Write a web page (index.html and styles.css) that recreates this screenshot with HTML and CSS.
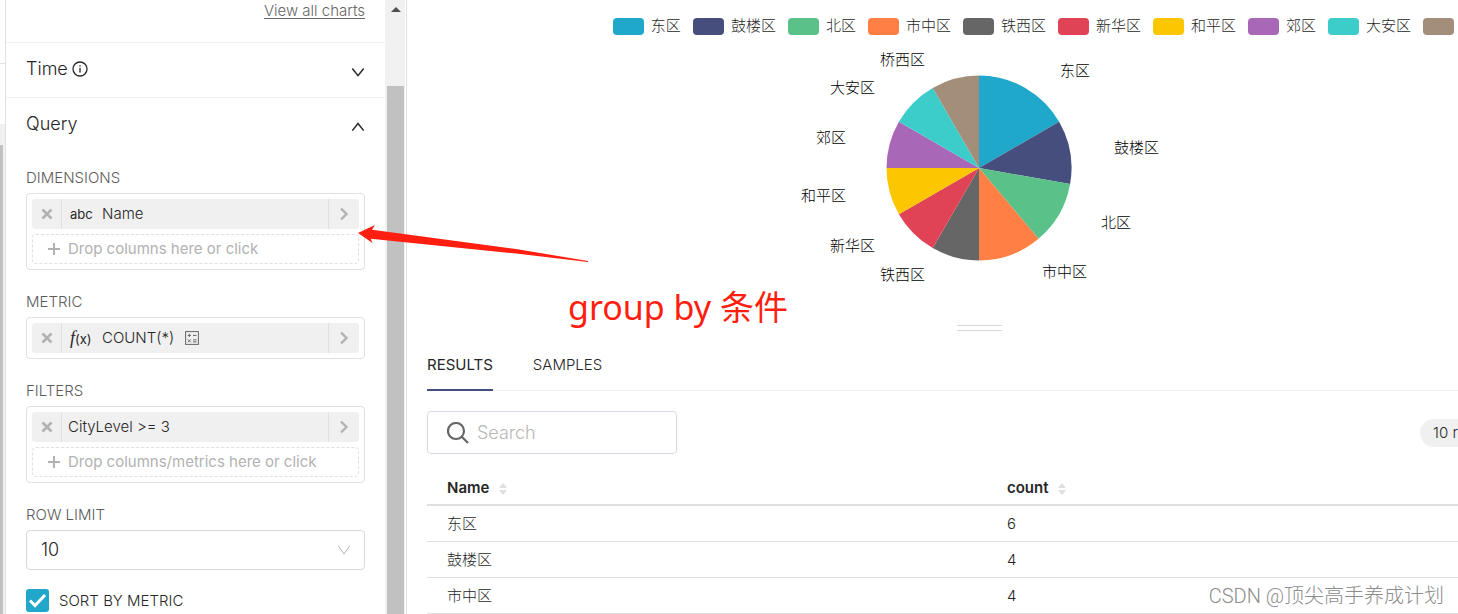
FILE: index.html
```html
<!DOCTYPE html>
<html lang="en">
<head>
<meta charset="utf-8">
<title>Explore chart</title>
<link rel="stylesheet" href="styles.css">
</head>
<body>
<div class="app">
  <div class="dataset-edge">
    <div class="edge-head"></div>
    <div class="edge-body"></div>
    <div class="edge-track"></div>
    <div class="edge-thumb"></div>
  </div>

  <aside class="controls">
    <div class="viz-type"><a class="all-charts" href="#">View all charts</a></div>
    <section class="panel">
      <button class="panel-head" type="button">
        <span>Time</span>
        <svg class="info" viewBox="0 0 16 16"><circle cx="8" cy="8" r="7"/><path d="M8 6.8V11.6M8 4.2V5.4"/></svg>
        <svg class="caret" viewBox="0 0 14 10"><path d="M1.3 1.5 7 8.6 12.7 1.5"/></svg>
      </button>
    </section>
    <section class="panel">
      <button class="panel-head" type="button">
        <span>Query</span>
        <svg class="caret" viewBox="0 0 14 10"><path d="M1.3 8.6 7 1.5 12.7 8.6"/></svg>
      </button>
      <div class="fields">
        <div class="field">
          <span class="label">DIMENSIONS</span>
          <div class="drop-box">
            <div class="chip">
              <button class="chip-x" type="button" aria-label="Remove Name"><svg viewBox="0 0 12 12"><path d="M1.5 1.5 10.5 10.5M10.5 1.5 1.5 10.5"/></svg></button>
              <span class="chip-text"><span class="type">abc</span><span>Name</span></span>
              <button class="chip-go" type="button" aria-label="Edit Name"><svg viewBox="0 0 10 14"><path d="M2 1.5 7.5 7 2 12.5"/></svg></button>
            </div>
            <button class="ghost" type="button"><svg viewBox="0 0 12 12"><path d="M6 0V12M0 6H12"/></svg>Drop columns here or click</button>
          </div>
        </div>
        <div class="field">
          <span class="label">METRIC</span>
          <div class="drop-box">
            <div class="chip">
              <button class="chip-x" type="button" aria-label="Remove COUNT(*)"><svg viewBox="0 0 12 12"><path d="M1.5 1.5 10.5 10.5M10.5 1.5 1.5 10.5"/></svg></button>
              <span class="chip-text"><span class="type"><i class="fx">f</i>(x)</span><span>COUNT(*)</span>
                <svg class="calc" viewBox="0 0 14 14"><rect x=".6" y=".6" width="12.8" height="12.8"/><path d="M2.7 4.4H6M4.35 2.8V6M8 4.4H11.5M2.9 8.4 5.8 11.3M5.8 8.4 2.9 11.3M8 8.9H11.5M8 10.9H11.5"/></svg></span>
              <button class="chip-go" type="button" aria-label="Edit COUNT(*)"><svg viewBox="0 0 10 14"><path d="M2 1.5 7.5 7 2 12.5"/></svg></button>
            </div>
          </div>
        </div>
        <div class="field">
          <span class="label">FILTERS</span>
          <div class="drop-box">
            <div class="chip">
              <button class="chip-x" type="button" aria-label="Remove filter"><svg viewBox="0 0 12 12"><path d="M1.5 1.5 10.5 10.5M10.5 1.5 1.5 10.5"/></svg></button>
              <span class="chip-text plain">CityLevel &gt;= 3</span>
              <button class="chip-go" type="button" aria-label="Edit filter"><svg viewBox="0 0 10 14"><path d="M2 1.5 7.5 7 2 12.5"/></svg></button>
            </div>
            <button class="ghost" type="button"><svg viewBox="0 0 12 12"><path d="M6 0V12M0 6H12"/></svg>Drop columns/metrics here or click</button>
          </div>
        </div>
        <div class="field">
          <label class="label" for="row-limit">ROW LIMIT</label>
          <div class="select-box">
            <select id="row-limit"><option>10</option></select>
            <svg viewBox="0 0 14 10"><path d="M1.3 1 7 9 12.7 1"/></svg>
          </div>
        </div>
      </div>
      <label class="check" for="sort-metric">
        <span class="check-box">
          <input id="sort-metric" type="checkbox" checked>
          <svg viewBox="0 0 23 23"><path d="M4 11.5 9 16.5 19 6"/></svg>
        </span>
        SORT BY METRIC
      </label>
    </section>
  </aside>

  <div class="scrollbar">
    <svg viewBox="0 0 10 5"><path d="M0 5 5 0 10 5Z"/></svg>
    <div class="thumb"></div>
  </div>

  <main class="main">
    <div class="content">
      <ul class="legend">
        <li><i class="swatch c1"></i>东区</li>
        <li><i class="swatch c2"></i>鼓楼区</li>
        <li><i class="swatch c3"></i>北区</li>
        <li><i class="swatch c4"></i>市中区</li>
        <li><i class="swatch c5"></i>铁西区</li>
        <li><i class="swatch c6"></i>新华区</li>
        <li><i class="swatch c7"></i>和平区</li>
        <li><i class="swatch c8"></i>郊区</li>
        <li><i class="swatch c9"></i>大安区</li>
        <li><i class="swatch c10"></i></li>
      </ul>
      <svg class="pie" width="400" height="270" viewBox="-200 -128 400 270">
        <path class="c1" d="M0 0V-92.5A92.5 92.5 0 0 1 80.11 -46.25Z"/>
        <path class="c2" d="M0 0L80.11 -46.25A92.5 92.5 0 0 1 91.09 16.06Z"/>
        <path class="c3" d="M0 0L91.09 16.06A92.5 92.5 0 0 1 59.46 70.86Z"/>
        <path class="c4" d="M0 0L59.46 70.86A92.5 92.5 0 0 1 0 92.5Z"/>
        <path class="c5" d="M0 0V92.5A92.5 92.5 0 0 1 -46.25 80.11Z"/>
        <path class="c6" d="M0 0L-46.25 80.11A92.5 92.5 0 0 1 -80.11 46.25Z"/>
        <path class="c7" d="M0 0L-80.11 46.25A92.5 92.5 0 0 1 -92.5 0Z"/>
        <path class="c8" d="M0 0H-92.5A92.5 92.5 0 0 1 -80.11 -46.25Z"/>
        <path class="c9" d="M0 0L-80.11 -46.25A92.5 92.5 0 0 1 -46.25 -80.11Z"/>
        <path class="c10" d="M0 0L-46.25 -80.11A92.5 92.5 0 0 1 0 -92.5Z"/>
        <text x="81" y="-92">东区</text>
        <text x="135" y="-15">鼓楼区</text>
        <text x="122" y="60">北区</text>
        <text x="63" y="109">市中区</text>
        <text class="end" x="-54" y="112">铁西区</text>
        <text class="end" x="-104" y="83">新华区</text>
        <text class="end" x="-133" y="33">和平区</text>
        <text class="end" x="-133" y="-25">郊区</text>
        <text class="end" x="-104" y="-75">大安区</text>
        <text class="end" x="-54" y="-103">桥西区</text>
      </svg>
      <div class="gutter"></div>
      <div class="tabs" role="tablist">
        <button class="tab active" role="tab" type="button">RESULTS</button>
        <button class="tab" role="tab" type="button">SAMPLES</button>
      </div>
      <div class="toolbar">
        <label class="search">
          <svg viewBox="0 0 22 22"><circle cx="9" cy="9" r="8"/><path d="M14.8 14.8 21 21"/></svg>
          <input type="text" placeholder="Search" aria-label="Search">
        </label>
        <span class="row-count">10 rows</span>
      </div>
      <table class="results">
        <thead>
          <tr>
            <th>Name <svg class="sort" viewBox="0 0 8 12"><path d="M4 0 7.5 4V5H.5V4ZM4 12 7.5 8V7H.5V8Z"/></svg></th>
            <th>count <svg class="sort" viewBox="0 0 8 12"><path d="M4 0 7.5 4V5H.5V4ZM4 12 7.5 8V7H.5V8Z"/></svg></th>
          </tr>
        </thead>
        <tbody>
          <tr><td>东区</td><td>6</td></tr>
          <tr><td>鼓楼区</td><td>4</td></tr>
          <tr><td>市中区</td><td>4</td></tr>
        </tbody>
      </table>
    </div>
  </main>

  <svg class="arrow" width="232" height="44" viewBox="0 0 232 44"><path d="M0 13 17 5 14 9.700 158 29 230 41V42L158 33.500 12.700 18.700 14.500 23Z"/></svg>
  <div class="note">group by 条件</div>
  <div class="watermark">CSDN @顶尖高手养成计划</div>
</div>
</body>
</html>
```

FILE: styles.css
```css
* { box-sizing: border-box; }

body {
  margin: 0;
  background: #fff;
  color: #262626;
  font: 300 15px/20px Inter, "Noto Sans CJK SC", sans-serif;
}

button, input, select { font: inherit; color: inherit; margin: 0; }
button { border: 0; padding: 0; background: none; text-align: left; }
svg { flex: none; fill: none; stroke: currentColor; }

.app {
  position: relative;
  display: flex;
  height: 100vh;
  overflow: hidden;
}

/* right edge of the dataset column */
.dataset-edge {
  flex: none;
  display: grid;
  grid-template-rows: 64px 60px 21px 1fr;
  width: 6px;
  border-right: 1px solid #e0e0e0;
}
.edge-head { border-bottom: 1px solid #e0e0e0; }
.edge-track { background: #f1f1f1; }
.edge-thumb { background: #c1c1c1; border-right: 2px solid #f1f1f1; }

/* control panel */
.controls { flex: none; width: 379px; }
.viz-type {
  display: flex;
  justify-content: flex-end;
  height: 43px;
  padding: 1px 20px 0;
  border-bottom: 1px solid #f0f0f0;
}
.all-charts { color: #666; text-underline-offset: 2px; }
.panel + .panel { border-top: 1px solid #f0f0f0; }
.panel-head {
  display: flex;
  align-items: center;
  gap: 4px;
  width: 100%;
  height: 54px;
  padding: 0 20px 2px;
  font-size: 18px;
}
.info { width: 16px; height: 16px; stroke-width: 1.3; }
.caret { width: 14px; height: 10px; margin: 6px 0 0 auto; stroke-width: 1.5; }

.fields { display: grid; gap: 22px; padding: 16px 20px 0; }
.field { display: grid; gap: 5px; }
.label { color: #5c5c5c; }
.drop-box {
  display: grid;
  gap: 5px;
  padding: 5px;
  border: 1px solid #e0e0e0;
  border-radius: 4px;
}
.chip {
  display: flex;
  height: 30px;
  border-radius: 3px;
  background: #f0f0f0;
}
.chip-x, .chip-go {
  display: grid;
  place-items: center;
  width: 30px;
  color: #b2b2b2;
}
.chip-x { border-right: 1px solid #e0e0e0; }
.chip-go { width: 31px; border-left: 1px solid #e0e0e0; }
.chip-x svg { width: 12px; height: 12px; stroke-width: 2.6; }
.chip-go svg { width: 10px; height: 14px; stroke-width: 2.4; }
.chip-text {
  display: flex;
  flex: 1;
  align-items: center;
  padding-left: 8px;
}
.chip-text.plain { padding-left: 6px; }
.type { width: 32px; font-size: 13px; font-weight: 400; white-space: nowrap; }
.fx { font: italic 18px/20px "Liberation Serif", serif; }
.calc { width: 14px; height: 14px; margin-left: 11px; color: #666; }
.ghost {
  display: flex;
  align-items: center;
  gap: 8px;
  height: 30px;
  padding-left: 15px;
  border: 1px dashed #e0e0e0;
  border-radius: 4px;
  color: #b2b2b2;
  font-weight: 400;
}
.ghost svg { width: 12px; height: 12px; stroke-width: 2; }

.select-box { display: grid; align-items: center; }
.select-box > * { grid-area: 1 / 1; }
.select-box select {
  appearance: none;
  height: 40px;
  padding: 0 14px;
  border: 1px solid #d9d9d9;
  border-radius: 4px;
  background: #fff;
  font-size: 18px;
}
.select-box svg {
  justify-self: end;
  width: 14px;
  height: 10px;
  margin-right: 14px;
  color: #b2b2b2;
}

.check { display: flex; align-items: center; gap: 10px; padding: 19px 20px 0; }
.check-box { display: grid; }
.check-box > * { grid-area: 1 / 1; width: 23px; height: 23px; }
.check-box input { appearance: none; border-radius: 3px; background: #20a7c9; }
.check-box svg { z-index: 1; color: #fff; stroke-width: 3; }

.scrollbar {
  flex: none;
  display: grid;
  grid-template-rows: 86px 1fr;
  justify-items: center;
  width: 22px;
  padding: 0 2px;
  border-right: 1px solid #e0e0e0;
  background: linear-gradient(90deg, #f1f1f1 20px, #fff 20px);
}
.scrollbar svg { width: 10px; height: 5px; margin-top: 7px; fill: #505050; stroke: none; }
.thumb { width: 17px; background: #c1c1c1; }

/* chart and results; the content runs on past the right edge */
.main { flex: 1; min-width: 0; }
.content {
  display: flex;
  flex-direction: column;
  margin: 0 -73px 0 20px;
}
.legend {
  display: flex;
  justify-content: flex-end;
  gap: 12px;
  margin: 0;
  padding: 16px 77px 0 0;
  list-style: none;
  white-space: nowrap;
}
.legend li { display: flex; align-items: center; gap: 7px; height: 20px; }
.swatch { width: 31px; height: 17px; border-radius: 4px; }

.c1 { background: #1fa8c9; fill: #1fa8c9; }
.c2 { background: #454e7c; fill: #454e7c; }
.c3 { background: #5ac189; fill: #5ac189; }
.c4 { background: #ff7f44; fill: #ff7f44; }
.c5 { background: #666; fill: #666; }
.c6 { background: #e04355; fill: #e04355; }
.c7 { background: #fcc700; fill: #fcc700; }
.c8 { background: #a868b7; fill: #a868b7; }
.c9 { background: #3cccca; fill: #3cccca; }
.c10 { background: #a38f79; fill: #a38f79; }

.pie { align-self: center; margin-top: 4px; stroke: none; }
.pie text { fill: #000; }
.pie .end { text-anchor: end; }

.gutter {
  align-self: center;
  width: 45px;
  height: 6px;
  margin-top: 15px;
  border: solid #d8d8d8;
  border-width: 1px 0;
}
.tabs { display: flex; gap: 40px; border-bottom: 1px solid #f0f0f0; }
.tab {
  height: 60px;
  margin-bottom: -1px;
  padding-top: 10px;
  border-bottom: 2px solid transparent;
}
.tab.active { border-color: #454e7c; font-weight: 400; }

.toolbar {
  display: flex;
  align-items: center;
  justify-content: space-between;
  padding: 20px 33px 17px 0;
}
.search {
  display: flex;
  align-items: center;
  gap: 8px;
  width: 250px;
  height: 43px;
  padding-left: 19px;
  border: 1px solid #d9d9e6;
  border-radius: 4px;
}
.search svg { width: 22px; height: 22px; color: #666; stroke-width: 2.2; }
.search input {
  flex: 1;
  min-width: 0;
  padding: 0;
  border: 0;
  outline: 0;
  background: none;
  font-size: 18px;
}
.search input::placeholder { color: #b8b8b8; opacity: 1; }
.row-count {
  width: 78px;
  padding: 4px 13px;
  border-radius: 14px;
  background: #f0f0f0;
  white-space: nowrap;
}

.results { width: 100%; border-collapse: separate; border-spacing: 0; table-layout: fixed; }
.results th, .results td {
  height: 35px;
  padding: 0 20px;
  border-bottom: 1px solid #e0e0e0;
  text-align: left;
}
.results td { height: 36px; }
.results th { border-bottom-width: 2px; font-weight: 600; }
.results th:first-child { width: 560px; }
.sort { width: 8px; height: 12px; margin-left: 6px; fill: #e0e0e0; stroke: none; vertical-align: -2px; }

/* annotations laid over the page */
.arrow { position: absolute; left: 358px; top: 220px; fill: #ff1e10; stroke: none; }
.note {
  position: absolute;
  left: 568px;
  top: 285px;
  color: #ff1e10;
  font: 400 34px/44px "Noto Sans", "Noto Sans CJK SC", sans-serif;
}
.watermark {
  position: absolute;
  right: 14px;
  bottom: 4px;
  color: #8c8c8c;
  font: 300 20px/28px Roboto, "Noto Sans CJK SC", sans-serif;
}
```
